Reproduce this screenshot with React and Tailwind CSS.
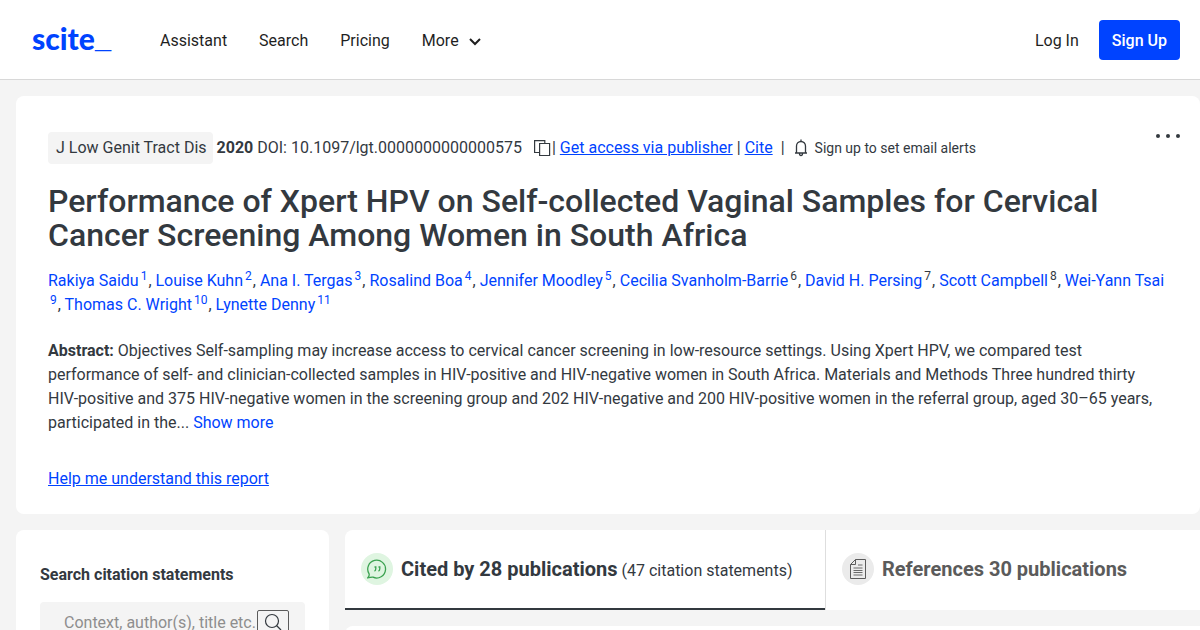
const authors = [
  { name: "Rakiya Saidu", ref: 1 },
  { name: "Louise Kuhn", ref: 2 },
  { name: "Ana I. Tergas", ref: 3 },
  { name: "Rosalind Boa", ref: 4 },
  { name: "Jennifer Moodley", ref: 5 },
  { name: "Cecilia Svanholm-Barrie", ref: 6, plain: true },
  { name: "David H. Persing", ref: 7, plain: true },
  { name: "Scott Campbell", ref: 8, plain: true },
  { name: "Wei-Yann Tsai", ref: 9 },
  { name: "Thomas C. Wright", ref: 10 },
  { name: "Lynette Denny", ref: 11 },
]

export default function App() {
  return (
    <div className="min-h-screen bg-[#f4f4f4] font-['Roboto',sans-serif] text-base text-[#33393f]">
      <Header />
      <main className="flex flex-col gap-4 pt-4 pl-4">
        <ReportCard />
        <div className="grid grid-cols-[313px_1fr] gap-4">
          <SearchPanel />
          <section>
            <div className="flex overflow-hidden rounded-tl-lg bg-white">
              <button className="flex h-20 w-[480px] items-center gap-2 border-b-2 border-[#33393f] px-4 text-left">
                <span className="flex size-8 items-center justify-center rounded-full bg-[#dff5e1]">
                  <QuoteBubble />
                </span>
                <span className="whitespace-nowrap">
                  <span className="text-xl font-bold">Cited by 28 publications</span> (47 citation statements)
                </span>
              </button>
              <div className="w-px bg-[#dedede]" />
              <button className="flex h-20 flex-1 items-center gap-2 border-b-2 border-white px-4 text-left text-xl font-bold text-[#5b5b5b]">
                <span className="flex size-8 items-center justify-center rounded-full bg-[#ebebeb]">
                  <DocIcon />
                </span>
                References 30 publications
              </button>
            </div>
            <div className="mt-4 h-20 rounded-tl-lg bg-white" />
          </section>
        </div>
      </main>
    </div>
  )
}

function Header() {
  return (
    <header className="flex h-20 items-center border-b border-[#d8d8d8] bg-white pr-5 pl-8 text-[#1f1f1f]">
      <a href="#" className="w-32">
        <svg width="96" height="56" viewBox="0 0 96 56" fill="#0043ff">
          <text x="0" y="38" fontFamily="Lato, sans-serif" fontWeight="900" fontSize="30">
            scite
            <tspan dy="-2" fontFamily="Liberation Sans, sans-serif" fontWeight="700" fontSize="29">_</tspan>
          </text>
        </svg>
      </a>
      <nav className="flex items-center gap-8 pt-0.5">
        <a href="#">Assistant</a>
        <a href="#">Search</a>
        <a href="#">Pricing</a>
        <button className="flex items-center gap-2">
          More
          <svg width="16" height="16" viewBox="0 0 16 16" fill="none" stroke="currentColor" strokeWidth="2">
            <path d="M3 6l5 5 5-5" />
          </svg>
        </button>
      </nav>
      <div className="ml-auto flex items-center gap-5">
        <a href="#" className="pt-0.5">Log In</a>
        <a href="#" className="rounded bg-[#0043ff] px-[13px] pt-[9px] pb-[7px] font-medium text-white">
          Sign Up
        </a>
      </div>
    </header>
  )
}

function ReportCard() {
  return (
    <article className="relative rounded-lg bg-white px-8 pt-9 pb-[23px]">
      <button aria-label="More options" className="absolute top-9 right-5">
        <svg width="24" height="8" viewBox="0 0 24 8" fill="currentColor">
          <circle cx="2" cy="4" r="2" />
          <circle cx="12" cy="4" r="2" />
          <circle cx="22" cy="4" r="2" />
        </svg>
      </button>

      <div className="flex items-center gap-1 whitespace-nowrap">
        <span className="rounded bg-[#f4f4f4] py-1 pr-1.5 pl-2">J Low Genit Tract Dis</span>
        <b>2020</b>
        <span>DOI: 10.1097/lgt.0000000000000575</span>
        <span className="ml-2 flex items-center">
          <button aria-label="Copy DOI">
            <svg width="18" height="18" viewBox="0 0 18 18" fill="none" stroke="currentColor" strokeWidth="1.2">
              <path d="M5.500 13.500H.6V1.600h10.200V4M5.600 4.500h10v12h-10z" />
            </svg>
          </button>
          |
        </span>
        <a href="#" className="text-[#0043ff] underline">Get access via publisher</a>
        <span>|</span>
        <a href="#" className="text-[#0043ff] underline">Cite</a>
        <span className="ml-1">|</span>
        <button className="ml-1 flex items-center gap-1.5 text-sm">
          <svg width="16" height="18" viewBox="0 0 16 18" fill="none" stroke="currentColor" strokeWidth="1.3">
            <path d="M8 .5v2M2 14h12M3.500 14V7a4.500 4.500 0 0 1 9 0v7M6.500 14.500c0 2.800 3 2.800 3 0" />
          </svg>
          Sign up to set email alerts
        </button>
      </div>

      <h1 className="mt-5 text-[32px] leading-[34px] font-medium">
        Performance of Xpert HPV on Self-collected Vaginal Samples for Cervical Cancer Screening Among Women in South
        Africa
      </h1>

      <p className="mt-[17px]">
        {authors.map(({ name, ref, plain }, i) => (
          <span key={ref}>
            {i > 0 && ", "}
            <a href="#" className="text-[#0043ff]">{name}</a>
            <wbr />
            <sup className={plain ? "mr-px ml-0.5" : "mr-px ml-0.5 text-[#0043ff]"}>{ref}</sup>
          </span>
        ))}
      </p>

      <p className="mt-[22px]">
        <b>Abstract:</b> Objectives Self-sampling may increase access to cervical cancer screening in low-resource
        settings. Using Xpert HPV, we compared test performance of self- and clinician-collected samples in
        HIV-positive and HIV-negative women in South Africa. Materials and Methods Three hundred thirty HIV-positive
        and 375 HIV-negative women in the screening group and 202 HIV-negative and 200 HIV-positive women in the
        referral group, aged 30–65 years, participated in the...{" "}
        <button className="text-[#0043ff]">Show more</button>
      </p>

      <a href="#" className="mt-8 inline-block text-[#0043ff] underline">Help me understand this report</a>
    </article>
  )
}

function SearchPanel() {
  return (
    <aside className="rounded-lg bg-white p-6 pt-[33px]">
      <label htmlFor="citation-search" className="block font-bold">Search citation statements</label>
      <div className="mt-[15px] flex h-10 items-center rounded bg-[#f4f4f4] pr-4 pl-6">
        <input
          id="citation-search"
          type="text"
          placeholder="Context, author(s), title etc."
          className="min-w-0 flex-1 pt-0.5 outline-none placeholder:text-[#8e8e8e]"
        />
        <button aria-label="Search" className="flex h-6 w-8 items-center justify-center rounded-xs border border-[#5b5b5b]">
          <svg width="18" height="18" viewBox="0 0 18 18" fill="none" stroke="currentColor" strokeWidth="1.2">
            <circle cx="8" cy="8" r="6.5" />
            <path d="M12.5 12.5L17 17" />
          </svg>
        </button>
      </div>
    </aside>
  )
}

function QuoteBubble() {
  return (
    <svg width="20" height="20" viewBox="0 0 20 20" fill="none" stroke="#3ba250" strokeWidth="1.3">
      <path d="M.8 18.800c1-1 1.700-2.300 1.300-4A8.900 8.900 0 1 1 6 18.200c-1.500-.4-3.200.6-5.200.6z" />
      <path d="M7.500 8h1.300v1.500c0 1.500-.4 2.200-1.300 2.700M11.500 8h1.300v1.500c0 1.500-.4 2.200-1.300 2.700" />
    </svg>
  )
}

function DocIcon() {
  return (
    <svg width="16" height="20" viewBox="0 0 16 20" fill="none" stroke="#5b5b5b">
      <path d="M5.500.5h10v19H.5v-14zM5.500.5v5h-5" />
      <path d="M8 6h4.500M3.500 9h9M3.500 11.500h9M3.500 13.500h9M3.500 16h9" strokeWidth="0.9" />
    </svg>
  )
}
